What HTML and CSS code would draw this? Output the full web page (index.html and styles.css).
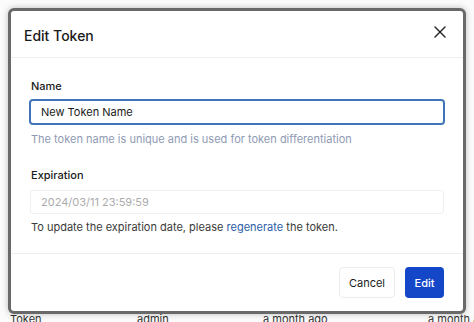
FILE: index.html
```
<!DOCTYPE html>
<html lang="en">
<head>
    <meta charset="UTF-8">
    <meta name="viewport" content="width=device-width, initial-scale=1.0">
    <title>Edit Token</title>
    <link rel="stylesheet" href="styles.css">
</head>
<body>
    <div class="page">
        <div class="row"><span class="c1">Token</span><span class="c2">admin</span><span class="c3">a month ago</span><span class="c4">a month ago</span></div>
    </div>

    <div class="modal">
        <div class="modal-header">
            <h2>Edit Token</h2>
            <button class="close" aria-label="Close">
                <svg width="12" height="12" viewBox="0 0 12 12"><path d="M1 1L11 11M11 1L1 11" stroke="#1f1f1f" stroke-width="1.4" stroke-linecap="round"/></svg>
            </button>
        </div>
        <div class="modal-body">
            <label for="name">Name</label>
            <input type="text" id="name" class="field focused" value="New Token Name">
            <p class="hint">The token name is unique and is used for token differentiation</p>

            <label for="exp" class="second">Expiration</label>
            <input type="text" id="exp" class="field disabled" value="2024/03/11 23:59:59" disabled>
            <p class="note">To update the expiration date, please <a href="#">regenerate</a> the token.</p>
        </div>
        <div class="modal-footer">
            <button class="btn cancel">Cancel</button>
            <button class="btn primary">Edit</button>
        </div>
    </div>
</body>
</html>
```

FILE: styles.css
```
html {
    overflow: hidden;
}
body {
    margin: 0;
    font-family: Inter, "Noto Sans", sans-serif;
    background-color: #fbfbfb;
    width: 474px;
    height: 322px;
    overflow: hidden;
    position: relative;
}
.page {
    padding-top: 311px;
    height: 11px;
    overflow: hidden;
}
.row {
    display: flex;
    height: 16px;
    align-items: center;
    font-size: 11px;
    color: #333;
    white-space: nowrap;
}
.c1 { flex: 0 0 127px; padding-left: 10px; }
.c2 { flex: 0 0 126px; }
.c3 { flex: 0 0 165px; }
.c4 { flex: 1 0 auto; }
.modal {
    position: absolute;
    left: 8px;
    top: 8px;
    width: 458px;
    height: 306px;
    box-sizing: border-box;
    background-color: #fff;
    border: 3px solid #696969;
    border-radius: 6px;
    box-shadow: 0 0 6px rgba(0, 0, 0, 0.25);
    display: flex;
    flex-direction: column;
}
.modal-header {
    display: flex;
    align-items: center;
    justify-content: space-between;
    padding: 14px 17px 11px 13px;
    border-bottom: 1px solid #eeeeee;
    height: 21px;
}
.modal-header h2 {
    margin: 0;
    font-size: 14px;
    font-weight: 500;
    color: #1a1a1a;
    line-height: 20px;
}
.close {
    background: none;
    border: none;
    padding: 0;
    margin-top: -8px;
    width: 12px;
    height: 12px;
    cursor: pointer;
}
.close svg { display: block; }
.modal-body {
    padding: 20px 19px 18px 19px;
    display: flex;
    flex-direction: column;
}
label {
    font-size: 11px;
    font-weight: 500;
    color: #1a1a1a;
    line-height: 16px;
    margin-left: 1px;
}
label.second {
    margin-top: 20px;
}
.field {
    margin-top: 6px;
    height: 24px;
    box-sizing: border-box;
    border-radius: 3px;
    padding: 0 10px;
    font-family: Inter, "Noto Sans", sans-serif;
    font-size: 11px;
    width: 100%;
    outline: none;
}
.focused {
    border: 1px solid #3f74b8;
    box-shadow: 0 0 0 1px #3f74b8;
    color: #1a1a1a;
}
.disabled {
    margin-top: 7px;
    border: 1px solid #f0f0f0;
    background-color: #fff;
    color: #ababab;
}
.hint {
    margin: 7px 0 0 1px;
    font-size: 11px;
    line-height: 16px;
    color: #8f9ab3;
}
.note {
    margin: 5px 0 0 1px;
    font-size: 11px;
    line-height: 16px;
    color: #3a3a3a;
}
.note a {
    color: #2c5ea8;
    text-decoration: none;
}
.modal-footer {
    border-top: 1px solid #eeeeee;
    padding: 13px 19px 0 0;
    display: flex;
    justify-content: flex-end;
    gap: 10px;
}
.btn {
    height: 31px;
    border-radius: 4px;
    font-family: Inter, "Noto Sans", sans-serif;
    font-size: 11px;
    cursor: pointer;
}
.cancel {
    width: 56px;
    background-color: #fff;
    border: 1px solid #ececec;
    color: #1a1a1a;
}
.primary {
    width: 39px;
    background-color: #1446c8;
    border: none;
    color: #fff;
    font-weight: 500;
}
```
